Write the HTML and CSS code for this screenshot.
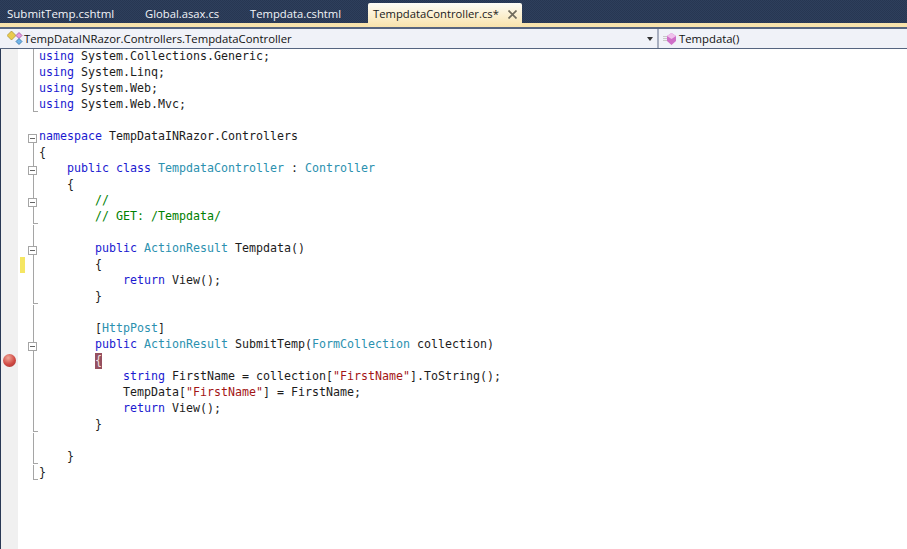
FILE: index.html
```html
<!doctype html>
<html lang="en">
<head>
    <meta charset="UTF-8">
    <title>TempdataController.cs</title>
    <link rel="stylesheet" href="styles.css">
</head>
<body>
    <div class="ide">
        <!-- Document tabs -->
        <div class="tabs">
            <div class="tab tab-first">SubmitTemp.cshtml</div>
            <div class="tab tab-second">Global.asax.cs</div>
            <div class="tab tab-third">Tempdata.cshtml</div>
            <div class="tab tab-active">
                <span>TempdataController.cs*</span>
                <svg class="tab-close" width="9" height="9" viewBox="0 0 9 9"><path d="M.5.5l8 8M8.500.5l-8 8" stroke="#716c5c" stroke-width="1.7" fill="none"/></svg>
            </div>
        </div>

        <!-- Type and member dropdowns -->
        <div class="navbar">
            <div class="nav-type">
                <svg class="nav-icon" width="17" height="16" viewBox="0 0 17 16">
                    <path d="M0 4.500L4.500 0 9 4.500 4.500 9z" fill="#eacb4c" stroke="#a58d34" stroke-width=".7"/>
                    <path d="M9 4.500L12 1.500l3 3-3 3z" fill="#e69bdc" stroke="#9a4fa0" stroke-width=".8"/>
                    <path d="M9 10.500l3-3 3 3-3 3z" fill="#6fb4e8" stroke="#2f6fa8" stroke-width=".8"/>
                </svg>
                <span>TempDataINRazor.Controllers.TempdataController</span>
                <svg class="nav-arrow" width="6" height="4" viewBox="0 0 6 4"><path d="M0 0h6L3 4z" fill="#333"/></svg>
            </div>
            <div class="nav-member">
                <svg class="nav-icon" width="14" height="12" viewBox="0 0 14 12">
                    <path d="M0 3.500h4M0 5.500h4M0 7.500h4" stroke="#c8c8c8" stroke-width="1"/>
                    <path d="M8.500 0l4.500 3v5l-4.500 4L4 8V3z" fill="#cf6fc8"/>
                    <path d="M4 3l4.500-3L13 3 8.500 6z" fill="#f0c0ec"/>
                </svg>
                <span>Tempdata()</span>
            </div>
        </div>

        <!-- Code editor -->
        <div class="editor">
            <div class="row"><i class="fold line"></i><code><b>using</b> System.Collections.Generic;</code></div>
            <div class="row"><i class="fold line"></i><code><b>using</b> System.Linq;</code></div>
            <div class="row"><i class="fold line"></i><code><b>using</b> System.Web;</code></div>
            <div class="row"><i class="fold end"></i><code><b>using</b> System.Web.Mvc;</code></div>
            <div class="row"><i class="fold"></i><code></code></div>
            <div class="row"><i class="fold open first"></i><code><b>namespace</b> TempDataINRazor.Controllers</code></div>
            <div class="row"><i class="fold line"></i><code>{</code></div>
            <div class="row"><i class="fold open"></i><code>    <b>public</b> <b>class</b> <u>TempdataController</u> : <u>Controller</u></code></div>
            <div class="row"><i class="fold line"></i><code>    {</code></div>
            <div class="row"><i class="fold open"></i><code>        <em>//</em></code></div>
            <div class="row"><i class="fold end"></i><code>        <em>// GET: /Tempdata/</em></code></div>
            <div class="row"><i class="fold line"></i><code></code></div>
            <div class="row"><i class="fold open"></i><code>        <b>public</b> <u>ActionResult</u> Tempdata()</code></div>
            <div class="row changed"><i class="fold line"></i><code>        {</code></div>
            <div class="row"><i class="fold line"></i><code>            <b>return</b> View();</code></div>
            <div class="row"><i class="fold end"></i><code>        }</code></div>
            <div class="row"><i class="fold line"></i><code></code></div>
            <div class="row"><i class="fold line"></i><code>        [<u>HttpPost</u>]</code></div>
            <div class="row"><i class="fold open"></i><code>        <b>public</b> <u>ActionResult</u> SubmitTemp(<u>FormCollection</u> collection)</code></div>
            <div class="row breakpoint"><i class="fold line"></i><code>        <mark>{</mark></code></div>
            <div class="row"><i class="fold line"></i><code>            <b>string</b> FirstName = collection[<s>"FirstName"</s>].ToString();</code></div>
            <div class="row"><i class="fold line"></i><code>            TempData[<s>"FirstName"</s>] = FirstName;</code></div>
            <div class="row"><i class="fold line"></i><code>            <b>return</b> View();</code></div>
            <div class="row"><i class="fold end"></i><code>        }</code></div>
            <div class="row"><i class="fold line"></i><code></code></div>
            <div class="row"><i class="fold end"></i><code>    }</code></div>
            <div class="row"><i class="fold end"></i><code>}</code></div>
        </div>
    </div>
</body>
</html>
```

FILE: styles.css
```css
/* Page */
body, html {
    margin: 0;
    padding: 0;
    height: 100%;
    overflow: hidden;
    background-color: #fff;
}

.ide {
    display: flex;
    flex-direction: column;
    height: 100%;
    font-family: "Open Sans", "Noto Sans", sans-serif;
    color: #111;
}

/* Tabs */
.tabs {
    display: flex;
    flex-shrink: 0;
    height: 20px;
    padding-top: 3px;
    font-size: 11.25px;
    background-color: #2a3a57;
    background-image: repeating-conic-gradient(#2e3f5c 0 25%, #273652 0 50%);
    background-size: 2px 2px;
    border-bottom: 4px solid #f8e3ac;
}

.tab {
    height: 23px;
    line-height: 22px;
    color: #f2f4f8;
    white-space: nowrap;
}

.tab-first { width: 138px; padding-left: 7px; font-size: 11.5px; }
.tab-second { width: 105px; }
.tab-third { width: 118px; }

.tab-active {
    display: flex;
    align-items: center;
    justify-content: space-between;
    width: 154px;
    height: 24px;
    padding: 0 5px 2px;
    box-sizing: border-box;
    color: #1a1a1a;
    border-radius: 2px 2px 0 0;
    background: linear-gradient(#fffdf6, #f8e3ac);
}

/* Dropdowns */
.navbar {
    display: flex;
    flex-shrink: 0;
    height: 19px;
    line-height: 19px;
    font-size: 11.33px;
    background-color: #f0f2f8;
    border-top: 2px solid #566580;
    border-bottom: 1px solid #566580;
}

.nav-type {
    display: flex;
    align-items: center;
    width: 659px;
    padding-left: 7px;
    box-sizing: border-box;
    border-right: 2px solid #a8afc0;
}

.nav-arrow { margin-left: auto; margin-right: 4px; }

.nav-member {
    display: flex;
    align-items: center;
    gap: 2px;
    padding-left: 4px;
}

.nav-icon { flex-shrink: 0; }

/* Editor */
.editor {
    flex-grow: 1;
    background: linear-gradient(to right, #293955 1px, #f0f0f0 1px, #f0f0f0 18px, #fff 18px);
    font-family: "DejaVu Sans Mono", monospace;
    font-size: 11.63px;
}

.row {
    position: relative;
    display: flex;
    height: 16px;
    padding-left: 28px;
}

.row code {
    font: inherit;
    line-height: 14px;
    white-space: pre;
    color: #1c1c1c;
}

.row b { font-weight: normal; color: #1a1ad0; }
.row u { text-decoration: none; color: #2b91af; }
.row em { font-style: normal; color: #008000; }
.row s { text-decoration: none; color: #a31515; }

.row mark {
    display: inline-block;
    height: 16px;
    color: #f0e0e0;
    background-color: #96505f;
}

/* Fold margin */
.fold {
    position: relative;
    flex-shrink: 0;
    width: 11px;
    height: 16px;
}

.fold.line, .fold.open { background: linear-gradient(#a5a5a5, #a5a5a5) 5px 0 / 1px 100% no-repeat; }
.fold.open.first { background-position: 5px 5px; }
.fold.end { background: linear-gradient(#a5a5a5, #a5a5a5) 5px 0 / 1px 15px no-repeat, linear-gradient(#a5a5a5, #a5a5a5) 5px 14px / 5px 1px no-repeat; }

.fold.open::before {
    content: "";
    position: absolute;
    left: 0;
    top: 5px;
    width: 9px;
    height: 9px;
    border: 1px solid #a5a5a5;
    background: linear-gradient(#666, #666) center / 5px 1px no-repeat, #fff;
    box-sizing: border-box;
}

/* Glyph margin markers */
.changed::before {
    content: "";
    position: absolute;
    left: 20px;
    top: 0;
    width: 5px;
    height: 16px;
    background-color: #f5e663;
}

.breakpoint::before {
    content: "";
    position: absolute;
    left: 3px;
    top: 1px;
    width: 13px;
    height: 13px;
    border-radius: 50%;
    background: radial-gradient(circle at 40% 30%, #f0a898, #d04a44 55%, #a03030);
}
```
